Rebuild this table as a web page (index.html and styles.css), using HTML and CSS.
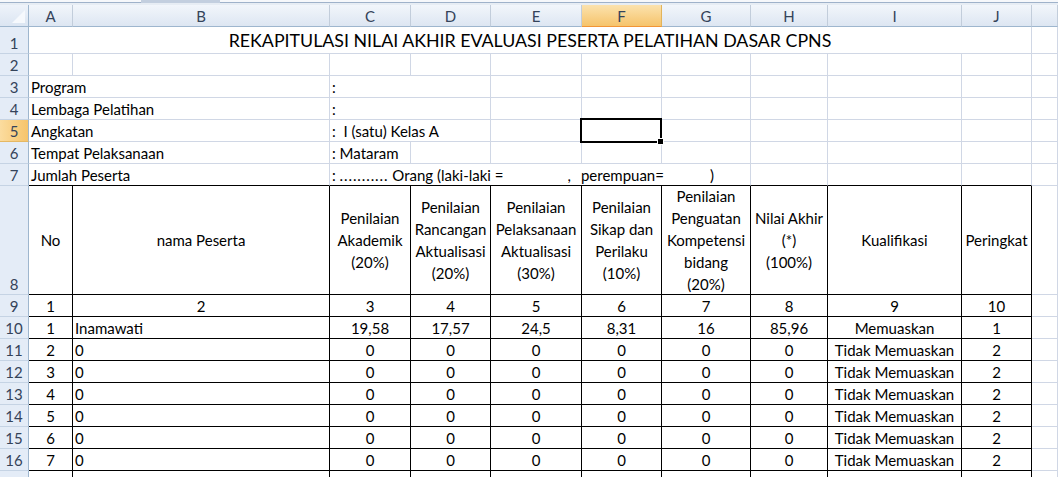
FILE: index.html
```html
<!DOCTYPE html>
<html>
<head>
<meta charset="utf-8">
<link rel="stylesheet" href="styles.css">
</head>
<body>
<div class="topbar"><div class="tab"></div></div>
<div class="sheet">
  <!-- column headers -->
  <div class="corner"><div class="tri"></div></div>
  <div class="ch">A</div><div class="ch">B</div><div class="ch">C</div><div class="ch">D</div><div class="ch">E</div>
  <div class="ch sel-h">F</div><div class="ch">G</div><div class="ch">H</div><div class="ch">I</div><div class="ch">J</div><div class="ch"></div>

  <!-- row 1 -->
  <div class="rh">1</div>
  <div class="c title s10">REKAPITULASI NILAI AKHIR EVALUASI PESERTA PELATIHAN DASAR CPNS</div>
  <div class="c"></div>

  <!-- row 2 -->
  <div class="rh">2</div>
  <div class="c"></div><div class="c"></div><div class="c"></div><div class="c"></div><div class="c"></div><div class="c"></div><div class="c"></div><div class="c"></div><div class="c"></div><div class="c"></div><div class="c"></div>

  <!-- row 3 -->
  <div class="rh">3</div>
  <div class="c s2">Program</div>
  <div class="c s2">:</div>
  <div class="c"></div><div class="c"></div><div class="c"></div><div class="c"></div><div class="c"></div><div class="c"></div><div class="c"></div>

  <!-- row 4 -->
  <div class="rh">4</div>
  <div class="c s2">Lembaga Pelatihan</div>
  <div class="c s2">:</div>
  <div class="c"></div><div class="c"></div><div class="c"></div><div class="c"></div><div class="c"></div><div class="c"></div><div class="c"></div>

  <!-- row 5 -->
  <div class="rh sel-r">5</div>
  <div class="c s2">Angkatan</div>
  <div class="c s2 pre">:  I (satu) Kelas A</div>
  <div class="c"></div>
  <div class="c cur"><div class="sel"><div class="handle"></div></div></div>
  <div class="c"></div><div class="c"></div><div class="c"></div><div class="c"></div><div class="c"></div>

  <!-- row 6 -->
  <div class="rh">6</div>
  <div class="c s2">Tempat Pelaksanaan</div>
  <div class="c">: Mataram</div>
  <div class="c"></div><div class="c"></div><div class="c"></div><div class="c"></div><div class="c"></div><div class="c"></div><div class="c"></div><div class="c"></div>

  <!-- row 7 -->
  <div class="rh">7</div>
  <div class="c s2 bb">Jumlah Peserta</div>
  <div class="c s5 bb pre">: <span class="dots">...........</span> Orang (laki-laki =<span class="gap-a"></span>,<span class="gap-b"></span>perempuan=<span class="gap-c"></span>)</div>
  <div class="c bb"></div><div class="c bb"></div><div class="c bb"></div><div class="c"></div>

  <!-- row 8 -->
  <div class="rh">8</div>
  <div class="c k mid">No</div>
  <div class="c k mid">nama Peserta</div>
  <div class="c k mid"><div>Penilaian<br>Akademik<br>(20%)</div></div>
  <div class="c k mid"><div>Penilaian<br>Rancangan<br>Aktualisasi<br>(20%)</div></div>
  <div class="c k mid"><div>Penilaian<br>Pelaksanaan<br>Aktualisasi<br>(30%)</div></div>
  <div class="c k mid"><div>Penilaian<br>Sikap dan<br>Perilaku<br>(10%)</div></div>
  <div class="c k mid"><div>Penilaian<br>Penguatan<br>Kompetensi<br>bidang<br>(20%)</div></div>
  <div class="c k mid"><div>Nilai Akhir<br>(*)<br>(100%)</div></div>
  <div class="c k mid">Kualifikasi</div>
  <div class="c k mid">Peringkat</div>
  <div class="c"></div>

  <!-- row 9 -->
  <div class="rh">9</div>
  <div class="c k ctr">1</div><div class="c k ctr">2</div><div class="c k ctr">3</div><div class="c k ctr">4</div><div class="c k ctr">5</div>
  <div class="c k ctr">6</div><div class="c k ctr">7</div><div class="c k ctr">8</div><div class="c k ctr">9</div><div class="c k ctr">10</div>
  <div class="c"></div>

  <!-- row 10 -->
  <div class="rh">10</div>
  <div class="c k ctr">1</div><div class="c k">Inamawati</div><div class="c k ctr">19,58</div><div class="c k ctr">17,57</div><div class="c k ctr">24,5</div>
  <div class="c k ctr">8,31</div><div class="c k ctr">16</div><div class="c k ctr">85,96</div><div class="c k ctr">Memuaskan</div><div class="c k ctr">1</div>
  <div class="c"></div>

  <!-- rows 11-16 -->
  <div class="rh">11</div>
  <div class="c k ctr">2</div><div class="c k">0</div><div class="c k ctr">0</div><div class="c k ctr">0</div><div class="c k ctr">0</div>
  <div class="c k ctr">0</div><div class="c k ctr">0</div><div class="c k ctr">0</div><div class="c k ctr">Tidak Memuaskan</div><div class="c k ctr">2</div>
  <div class="c"></div>

  <div class="rh">12</div>
  <div class="c k ctr">3</div><div class="c k">0</div><div class="c k ctr">0</div><div class="c k ctr">0</div><div class="c k ctr">0</div>
  <div class="c k ctr">0</div><div class="c k ctr">0</div><div class="c k ctr">0</div><div class="c k ctr">Tidak Memuaskan</div><div class="c k ctr">2</div>
  <div class="c"></div>

  <div class="rh">13</div>
  <div class="c k ctr">4</div><div class="c k">0</div><div class="c k ctr">0</div><div class="c k ctr">0</div><div class="c k ctr">0</div>
  <div class="c k ctr">0</div><div class="c k ctr">0</div><div class="c k ctr">0</div><div class="c k ctr">Tidak Memuaskan</div><div class="c k ctr">2</div>
  <div class="c"></div>

  <div class="rh">14</div>
  <div class="c k ctr">5</div><div class="c k">0</div><div class="c k ctr">0</div><div class="c k ctr">0</div><div class="c k ctr">0</div>
  <div class="c k ctr">0</div><div class="c k ctr">0</div><div class="c k ctr">0</div><div class="c k ctr">Tidak Memuaskan</div><div class="c k ctr">2</div>
  <div class="c"></div>

  <div class="rh">15</div>
  <div class="c k ctr">6</div><div class="c k">0</div><div class="c k ctr">0</div><div class="c k ctr">0</div><div class="c k ctr">0</div>
  <div class="c k ctr">0</div><div class="c k ctr">0</div><div class="c k ctr">0</div><div class="c k ctr">Tidak Memuaskan</div><div class="c k ctr">2</div>
  <div class="c"></div>

  <div class="rh">16</div>
  <div class="c k ctr">7</div><div class="c k">0</div><div class="c k ctr">0</div><div class="c k ctr">0</div><div class="c k ctr">0</div>
  <div class="c k ctr">0</div><div class="c k ctr">0</div><div class="c k ctr">0</div><div class="c k ctr">Tidak Memuaskan</div><div class="c k ctr">2</div>
  <div class="c"></div>

  <!-- row 17 (only its top edge is in view) -->
  <div class="rh last"></div>
  <div class="c k last"></div><div class="c k last"></div><div class="c k last"></div><div class="c k last"></div><div class="c k last"></div>
  <div class="c k last"></div><div class="c k last"></div><div class="c k last"></div><div class="c k last"></div><div class="c k last"></div>
  <div class="c last"></div>
</div>
</body>
</html>
```
FILE: styles.css
```css
html, body {
  margin: 0;
  padding: 0;
}
body {
  width: 1058px;
  height: 477px;
  overflow: hidden;
  background: #ffffff;
  font-family: Lato, "Open Sans", sans-serif;
  font-size: 15px;
  color: #000;
}

.topbar {
  height: 5px;
  background: linear-gradient(#f6f8fb 0 2px, #9fb2ca 2px 3px, #e7edf4 3px);
  position: relative;
}
.tab {
  position: absolute;
  left: 141px;
  top: 0;
  width: 79px;
  height: 3px;
  background: #c3cfdf;
}

.sheet {
  display: grid;
  grid-template-columns: 29px 44px 257px 81px 80px 91px 80px 89px 77px 134px 70px 1fr;
  grid-template-rows: 22px 27px repeat(6, 22px) 109px repeat(8, 22px) 6px;
}

.sheet > div {
  box-sizing: border-box;
  min-width: 0;
}

/* header cells */
.corner {
  background: linear-gradient(#eef3fa, #dbe5f2);
  border-right: 1px solid #9eb6ce;
  border-bottom: 1px solid #9eb6ce;
  position: relative;
}
.tri {
  position: absolute;
  right: 3px;
  bottom: 3px;
  width: 0;
  height: 0;
  border-left: 13px solid transparent;
  border-bottom: 13px solid #f6f9fd;
}
.ch {
  background: linear-gradient(#f2f6fb, #dde6f2);
  border-right: 1px solid #c2cddb;
  border-bottom: 1px solid #9eb6ce;
  display: flex;
  align-items: center;
  justify-content: center;
  color: #34435a;
  font-size: 15px;
}
.ch.sel-h {
  background: linear-gradient(#fbe2ae, #f6c46b);
  border-right-color: #e2b45b;
  border-bottom-color: #f29536;
}
.rh {
  background: #e4ecf7;
  border-right: 1px solid #9eb6ce;
  border-bottom: 1px solid #c5d3e4;
  display: flex;
  align-items: flex-end;
  justify-content: center;
  color: #34435a;
  font-size: 15px;
  line-height: 20px;
}
.rh.sel-r {
  background: linear-gradient(90deg, #fbdc9f, #f6c46b);
  border-bottom-color: #e5b864;
}

/* body cells */
.c {
  border-right: 1px solid #d0d7e5;
  border-bottom: 1px solid #d0d7e5;
  display: flex;
  align-items: flex-end;
  padding: 0 2px;
  line-height: 20px;
  white-space: nowrap;
  overflow: hidden;
}
.sheet > .last { border-bottom: none; }

.s2 { grid-column: span 2; }
.s5 { grid-column: span 5; }
.s10 { grid-column: span 10; }
.pre { white-space: pre; }

.title {
  justify-content: center;
  font-size: 17.8px;
  line-height: 24px;
  padding-bottom: 1px;
}

.bb { border-bottom-color: #000; }
.k {
  border-right-color: #000;
  border-bottom-color: #000;
}
.ctr { justify-content: center; }
.mid {
  align-items: center;
  justify-content: center;
  text-align: center;
  line-height: 22px;
  overflow: hidden;
}

.dots { letter-spacing: 0.9px; }
.gap-a { display: inline-block; width: 64px; }
.gap-b { display: inline-block; width: 10px; }
.gap-c { display: inline-block; width: 46px; }

/* selected cell */
.cur { position: relative; overflow: visible; }
.sel {
  position: absolute;
  left: -2px;
  top: -2px;
  right: -1px;
  bottom: -2px;
  border: 2px solid #000;
  z-index: 2;
}
.handle {
  position: absolute;
  right: -4px;
  bottom: -4px;
  width: 5px;
  height: 5px;
  background: #000;
  border: 1px solid #fff;
}
```
